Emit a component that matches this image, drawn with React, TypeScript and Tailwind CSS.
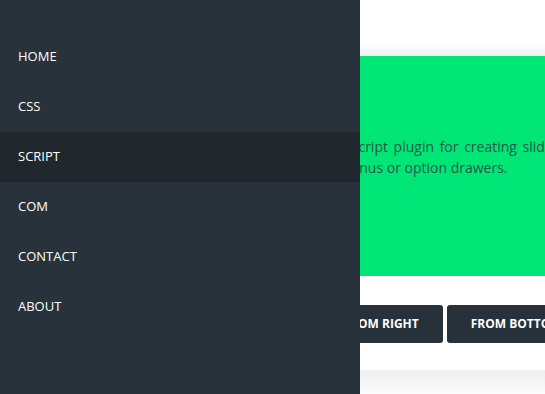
import React from 'react'

const menu = ['Home', 'CSS', 'Script', 'Com', 'Contact', 'About']
const buttons = ['From left', 'From right', 'From bottom', 'From top']

export default function App() {
  const active = 'Script'

  return (
    <div className="relative h-[394px] w-[545px] overflow-hidden bg-white font-['Open_Sans',sans-serif]">
      {/* page behind the drawer */}
      <main className="flex flex-col">
        <header className="h-[56px] bg-gradient-to-b from-white from-[78%] to-[#f1f1f1]" />

        <section className="h-[220px] bg-[#00e676] pt-[80px]">
          <div className="ml-[300px] flex w-[246px] flex-col items-center whitespace-nowrap text-[14px] leading-[21px] text-[#2a5446]">
            <span className="[word-spacing:2px]">A tiny javascript plugin for creating sliding</span>
            <span>menus or option drawers.</span>
          </div>
        </section>

        <section className="flex h-[94px] gap-[4px] pl-[202px] pt-[29px]">
          {buttons.map((b) => (
            <button
              key={b}
              className="h-[38px] shrink-0 rounded-[3px] bg-[#273139] px-6 text-[12px] font-bold uppercase text-white"
            >
              {b}
            </button>
          ))}
        </section>

        <footer className="h-[24px] bg-gradient-to-b from-[#eeeeee] to-[#fbfbfb]" />
      </main>

      {/* drawer overlay */}
      <nav className="absolute inset-y-0 left-0 w-[360px] bg-[#28323a] pt-[32px]">
        <ul>
          {menu.map((item) => (
            <li
              key={item}
              className={
                'flex h-[50px] items-center px-[18px] text-[13px] uppercase text-white ' +
                (item === active ? 'bg-[#20272d]' : '')
              }
            >
              {item}
            </li>
          ))}
        </ul>
      </nav>
    </div>
  )
}
